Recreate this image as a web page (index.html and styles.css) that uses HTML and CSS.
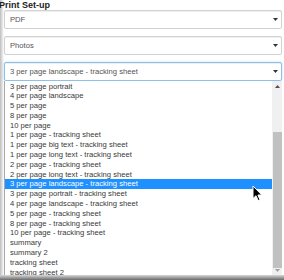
FILE: index.html
```html
<!DOCTYPE html>
<html lang="en">
<head>
    <meta charset="UTF-8">
    <meta name="viewport" content="width=device-width, initial-scale=1.0">
    <title>Print Set-up</title>
    <link rel="stylesheet" href="styles.css">
</head>
<body>
    <div class="sheet">
        <h1 class="title">Print Set-up</h1>
        <div class="field">
            <span>PDF</span>
            <svg class="caret" width="5" height="3" viewBox="0 0 5 3"><polygon points="0,0 5,0 2.5,3"/></svg>
        </div>
        <div class="field">
            <span>Photos</span>
            <svg class="caret" width="5" height="3" viewBox="0 0 5 3"><polygon points="0,0 5,0 2.5,3"/></svg>
        </div>
        <div class="field focused">
            <span>3 per page landscape - tracking sheet</span>
            <svg class="caret" width="5" height="3" viewBox="0 0 5 3"><polygon points="0,0 5,0 2.5,3"/></svg>
        </div>
        <div class="listbox">
            <ul class="options">
                <li>3 per page portrait</li>
                <li>4 per page landscape</li>
                <li>5 per page</li>
                <li>8 per page</li>
                <li>10 per page</li>
                <li>1 per page - tracking sheet</li>
                <li>1 per page big text - tracking sheet</li>
                <li>1 per page long text - tracking sheet</li>
                <li>2 per page - tracking sheet</li>
                <li>2 per page long text - tracking sheet</li>
                <li class="selected">3 per page landscape - tracking sheet</li>
                <li>3 per page portrait - tracking sheet</li>
                <li>4 per page landscape - tracking sheet</li>
                <li>5 per page - tracking sheet</li>
                <li>8 per page - tracking sheet</li>
                <li>10 per page - tracking sheet</li>
                <li>summary</li>
                <li>summary 2</li>
                <li>tracking sheet</li>
                <li>tracking sheet 2</li>
            </ul>
            <div class="scrollbar">
                <div class="arrow up">
                    <svg width="5" height="3" viewBox="0 0 5 3"><polygon points="0,3 5,3 2.5,0"/></svg>
                </div>
                <div class="track"><div class="thumb"></div></div>
                <div class="arrow down">
                    <svg width="5" height="3" viewBox="0 0 5 3"><polygon points="0,0 5,0 2.5,3"/></svg>
                </div>
            </div>
        </div>
        <div class="shade"></div>
    </div>

    <!-- mouse pointer over the highlighted option -->
    <svg class="pointer" width="11" height="17" viewBox="0 0 11 17">
        <path d="M1 1 L1 13.5 L4 10.7 L6.2 15.6 L8 14.8 L5.9 10 L9.8 10 Z"/>
    </svg>
</body>
</html>
```

FILE: styles.css
```css
body {
    margin: 0;
    width: 284px;
    height: 280px;
    overflow: hidden;
    position: relative;
    background: linear-gradient(to right, #bdbdbd, #fff 4px);
    font-family: "Liberation Sans", Arial, sans-serif;
}
.sheet {
    height: 280px;
    padding: 0 2px 0 4px;
    display: flex;
    flex-direction: column;
}
.title {
    margin: 0 0 0 -5px;
    height: 10px;
    font-size: 9px;
    line-height: 10px;
    font-weight: bold;
    color: #222;
}
.field {
    flex: none;
    height: 19px;
    box-sizing: border-box;
    margin-bottom: 7px;
    padding: 0 3px 0 5px;
    display: flex;
    align-items: center;
    justify-content: space-between;
    background: #fff;
    border: 1px solid #d2d2d2;
    border-radius: 2px;
    box-shadow: inset 0 1px 1px rgba(0, 0, 0, 0.07);
    font-size: 7.65px;
    color: #555;
}
.field.focused {
    margin-bottom: 0;
    border-color: #8ec1ea;
    box-shadow: inset 0 1px 1px rgba(0, 0, 0, 0.07), 0 0 2px rgba(102, 175, 233, 0.5);
}
.caret {
    fill: #333;
}
.listbox {
    flex: 1;
    min-height: 0;
    display: flex;
    background: #fff;
    border-left: 1px solid #a8a8a8;
    overflow: hidden;
}
.options {
    flex: 1;
    margin: 0;
    padding: 0.5px 0 0 0;
    list-style: none;
    font-size: 7.65px;
    color: #3a3a3a;
}
.options li {
    height: 9.8px;
    line-height: 9.8px;
    padding-left: 5px;
    white-space: nowrap;
}
.options li.selected {
    background: #1e90ff;
    color: #fff;
}
.scrollbar {
    width: 10px;
    display: flex;
    flex-direction: column;
    background: #f0f0f0;
}
.arrow {
    flex: none;
    display: flex;
    justify-content: center;
}
.arrow.up {
    height: 10px;
    align-items: center;
    fill: #505050;
}
.arrow.down {
    height: 6px;
    align-items: flex-start;
    padding-top: 1px;
    fill: #a0a0a0;
}
.track {
    flex: 1;
    display: flex;
    flex-direction: column;
    padding: 41px 0 0 1px;
}
.thumb {
    flex: 1;
    background: #c1c1c1;
}
.shade {
    flex: none;
    height: 5px;
    margin: 0 -2px 0 -4px;
    background: linear-gradient(to bottom, #d8d8d8, #6a6a6a);
}
.pointer {
    position: absolute;
    left: 252px;
    top: 185px;
    fill: #000;
    stroke: #fff;
    stroke-width: 1;
}
```
